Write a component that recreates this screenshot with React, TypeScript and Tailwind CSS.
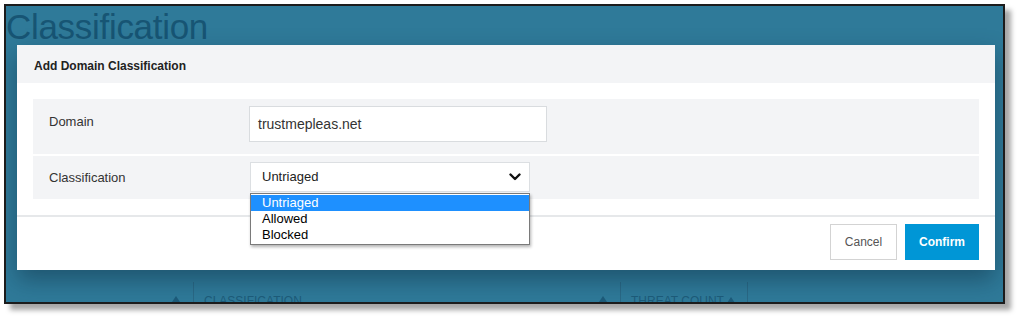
import React from 'react';

const FONT = { fontFamily: '"Liberation Sans", Arial, sans-serif' };

const SortUp = ({ className = '' }: { className?: string }) => (
  <svg width="8" height="6" viewBox="0 0 8 6" className={className}>
    <polygon points="4,0 8,6 0,6" fill="currentColor" />
  </svg>
);

const Chevron = () => (
  <svg width="12" height="8" viewBox="0 0 12 8" fill="none" stroke="#111" strokeWidth="2.4" strokeLinecap="round" strokeLinejoin="round">
    <polyline points="1.5,1.5 6,6 10.5,1.5" />
  </svg>
);

const OPTIONS = ['Untriaged', 'Allowed', 'Blocked'];

export default function App() {
  return (
    <div className="w-[1017px] h-[317px] bg-white" style={FONT}>
      <div className="relative ml-[4px] pt-[4px]">
        {/* screenshot frame */}
        <div className="relative w-[1001px] h-[300px] border-2 border-[#1c1c1c] bg-[#2f7a99] overflow-hidden shadow-[6px_6px_5px_rgba(0,0,0,0.35)]">
          {/* page behind overlay */}
          <div className="flex flex-col h-full">
            <div className="pt-[3px] text-[35px] leading-[35px] text-[#175574] tracking-[-0.3px]">Classification</div>
            <div className="flex-1" />
            <div className="flex h-[20px] text-[#1d5c7a]">
              <div className="w-[187px] flex justify-end items-start pr-[13px] pt-[14px]">
                <SortUp />
              </div>
              <div className="w-[427px] border-l border-[#2a6986] flex justify-between pl-[10px] pr-[13px] pt-[12px] text-[12px] leading-[14px]">
                <span className="whitespace-nowrap">CLASSIFICATION</span>
                <SortUp className="mt-[2px]" />
              </div>
              <div className="w-[127px] border-l border-[#2a6986] flex items-start gap-[3px] pl-[10px] pt-[12px] text-[12px] leading-[14px] whitespace-nowrap">
                <span>THREAT COUNT</span>
                <SortUp className="mt-[3px]" />
              </div>
              <div className="flex-1 border-l border-[#2a6986]" />
            </div>
          </div>

          {/* modal */}
          <div className="absolute left-[11px] top-[39px] w-[978px] h-[225px] bg-white shadow-[0_10px_22px_rgba(10,40,60,0.45)]">
            <div className="h-[38px] bg-[#f3f4f6] pl-[17px] flex items-center pt-[4px] text-[12px] font-bold text-[#222]">
              Add Domain Classification
            </div>

            <div className="p-[16px]">
              <div className="bg-[#f3f4f6]">
                <div className="h-[55px] flex">
                  <div className="w-[216px] pl-[16px] pt-[15px] text-[13px] leading-[16px] text-[#333]">Domain</div>
                  <div className="pt-[7px]">
                    <div className="w-[298px] h-[36px] bg-white border border-[#d9dcdf] flex items-center pl-[8px] text-[14px] text-[#333]">
                      trustmepleas.net
                    </div>
                  </div>
                </div>
                <div className="h-[2px] bg-white" />
                <div className="h-[43px] flex">
                  <div className="w-[217px] pl-[16px] pt-[14px] text-[13px] leading-[16px] text-[#333]">Classification</div>
                  <div className="pt-[6px]">
                    <div className="w-[280px] h-[30px] bg-white border border-[#dcdfe2] flex items-center justify-between pl-[11px] pr-[8px] text-[13px] text-[#222]">
                      <span>Untriaged</span>
                      <Chevron />
                    </div>
                  </div>
                </div>
              </div>
            </div>

            <div className="border-t-2 border-[#e6e8ea] pt-[7px] pr-[16px] flex justify-end gap-[8px]">
              <button className="w-[67px] h-[36px] bg-white border border-[#d3d3d3] text-[12px] text-[#555]">Cancel</button>
              <button className="w-[74px] h-[36px] bg-[#0096d6] text-[12px] font-bold text-white">Confirm</button>
            </div>

            {/* open select list */}
            <div className="absolute left-[233px] top-[148px] w-[280px] bg-white border border-[#7a7a7a] shadow-[1px_2px_3px_rgba(0,0,0,0.3)] py-[1px]">
              {OPTIONS.map((o, i) => (
                <div
                  key={o}
                  className={`h-[16px] pl-[11px] text-[13px] leading-[16px] ${i === 0 ? 'bg-[#1e90ff] text-white' : 'text-black'}`}
                >
                  {o}
                </div>
              ))}
            </div>
          </div>
        </div>
      </div>
    </div>
  );
}
